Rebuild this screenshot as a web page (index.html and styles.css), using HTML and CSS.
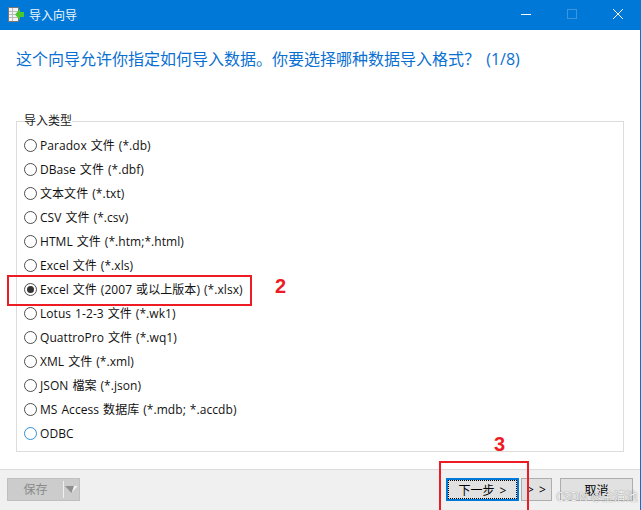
FILE: index.html
```html
<!DOCTYPE html>
<html lang="zh-CN">
<head>
<meta charset="utf-8">
<title>导入向导</title>
<link rel="stylesheet" href="styles.css">
</head>
<body>
<div class="window">
  <header class="titlebar">
    <svg class="app-icon" width="17" height="16" viewBox="0 0 17 16">
      <rect x="0.5" y="0.5" width="10" height="14" fill="#f4f4f4" stroke="#777"/>
      <path d="M1 4.5H10M1 7.5H10M1 10.5H10M4.5 1V14" stroke="#bbb" fill="none"/>
      <path d="M16 5H12V2L7 7.5L12 13V10H16Z" fill="#4cc72c"/>
    </svg>
    <span class="title">导入向导</span>
    <div class="controls">
      <svg class="ctl" width="46" height="30" viewBox="0 0 46 30"><path d="M18 14.5H28" stroke="#fff"/></svg>
      <svg class="ctl" width="46" height="30" viewBox="0 0 46 30"><rect x="18.5" y="9.5" width="9" height="9" fill="none" stroke="#3d95de"/></svg>
      <svg class="ctl" width="46" height="30" viewBox="0 0 46 30"><path d="M18 9L28 19M28 9L18 19" stroke="#fff"/></svg>
    </div>
  </header>
  <main class="content">
    <h1 class="heading">这个向导允许你指定如何导入数据。你要选择哪种数据导入格式？ (1/8)</h1>
    <fieldset class="group">
      <legend class="legend">导入类型</legend>
      <div class="option"><span class="radio"></span>Paradox 文件 (*.db)</div>
      <div class="option"><span class="radio"></span>DBase 文件 (*.dbf)</div>
      <div class="option"><span class="radio"></span>文本文件 (*.txt)</div>
      <div class="option"><span class="radio"></span>CSV 文件 (*.csv)</div>
      <div class="option"><span class="radio"></span>HTML 文件 (*.htm;*.html)</div>
      <div class="option"><span class="radio"></span>Excel 文件 (*.xls)</div>
      <div class="option"><span class="radio checked"></span>Excel 文件 (2007 或以上版本) (*.xlsx)</div>
      <div class="option"><span class="radio"></span>Lotus 1-2-3 文件 (*.wk1)</div>
      <div class="option"><span class="radio"></span>QuattroPro 文件 (*.wq1)</div>
      <div class="option"><span class="radio"></span>XML 文件 (*.xml)</div>
      <div class="option"><span class="radio"></span>JSON 檔案 (*.json)</div>
      <div class="option"><span class="radio"></span>MS Access 数据库 (*.mdb; *.accdb)</div>
      <div class="option"><span class="radio hover"></span>ODBC</div>
    </fieldset>
  </main>
  <footer class="footer">
    <div class="save-btn">
      <span class="save-label">保存</span>
      <svg class="save-arrow" width="13" height="7" viewBox="0 0 13 7"><path d="M0 0H13L6.5 7Z" fill="#8f8f8f"/><path d="M13 0L6.5 7L9 0Z" fill="#f4f4f4"/></svg>
    </div>
    <div class="nav">
      <button class="btn next">下一步 &gt;</button>
      <button class="btn skip">&gt; &gt;</button>
      <button class="btn cancel">取消</button>
    </div>
  </footer>
  <div class="mark mark-2"></div>
  <div class="num num-2">2</div>
  <div class="mark mark-3"></div>
  <div class="num num-3">3</div>
  <div class="watermark">CSDN @金清池</div>
</div>
</body>
</html>
```
FILE: styles.css
```css
* { box-sizing: border-box; }
html, body { margin: 0; padding: 0; background: #fff; }
body { width: 641px; height: 510px; overflow: hidden; font-family: "Open Sans", "Noto Sans CJK SC", sans-serif; font-size: 12px; color: #000; }
.window { position: relative; width: 641px; height: 510px; display: flex; flex-direction: column; border-right: 1px solid #0078d7; }
.titlebar { height: 30px; flex: none; background: #0078d7; display: flex; align-items: center; padding-left: 8px; color: #fff; }
.app-icon { flex: none; }
.title { margin-left: 4px; font-size: 12px; color: #f0f6fc; }
.controls { margin-left: auto; display: flex; margin-right: -1px; }
.ctl { display: block; }
.content { flex: 1; padding: 18px 16px 0; min-height: 0; }
.heading { margin: 0; font-weight: 400; font-size: 16px; line-height: 22px; color: #0a70d2; white-space: nowrap; word-spacing: 2px; }
.group { margin: 43px 0 0; padding: 4px 0 0 6px; width: 608px; height: 339px; border: 1px solid #dcdcdc; position: relative; display: block; }
.legend { padding: 0; margin-left: 1px; line-height: 16px; font-size: 12px; color: #222; }
.option { height: 24px; display: flex; align-items: center; white-space: nowrap; font-size: 12px; color: #111; word-spacing: .8px; letter-spacing: .06px; }
.radio { width: 13px; height: 13px; border: 1px solid #4d4d4d; border-radius: 50%; background: #fff; margin: 0 3px 0 1px; flex: none; position: relative; }
.radio.checked::after { content: ""; position: absolute; left: 2px; top: 2px; width: 7px; height: 7px; border-radius: 50%; background: #333; }
.radio.hover { border-color: #2d8fdc; }
.footer { height: 41px; flex: none; background: #f0f0f0; border-top: 1px solid #dadada; display: flex; align-items: flex-start; padding: 8px 7px 0 7px; justify-content: space-between; }
.save-btn { width: 73px; height: 23px; background: #ccc; border: 1px solid #bfbfbf; display: flex; align-items: center; }
.save-label { width: 56px; height: 17px; line-height: 17px; text-align: center; color: #8a8a8a; font-size: 12px; border-right: 1px solid #f0f0f0; }
.save-arrow { display: block; margin-left: 1px; flex: none; }
.nav { display: flex; }
.btn { height: 23px; font-family: inherit; font-size: 12px; padding: 0; background: #e1e1e1; border: 1px solid #adadad; color: #000; }
.next { width: 73px; margin-right: 2px; border: 2px solid #0078d7; outline: 1px dotted #000; outline-offset: -3px; word-spacing: 2px; }
.skip { width: 31px; margin-right: 8px; word-spacing: 2px; }
.cancel { width: 73px; }
.mark { position: absolute; border: 2px solid #ed1c24; }
.mark-2 { left: 7px; top: 275px; width: 245px; height: 31px; }
.mark-3 { left: 439px; top: 461px; width: 90px; height: 60px; }
.num { position: absolute; color: #ed1c24; font: 700 20px/20px "Liberation Sans", sans-serif; }
.num-2 { left: 275px; top: 276px; }
.num-3 { left: 494px; top: 434px; }
.watermark { position: absolute; left: 556px; top: 489px; color: rgba(255,255,255,.9); font-size: 12px; line-height: 16px; white-space: nowrap; text-shadow: 0 0 1px rgba(70,70,70,.8); }
```
